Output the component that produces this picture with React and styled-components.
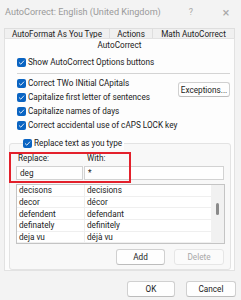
import React from "react";
import styled, { createGlobalStyle } from "styled-components";

const Global = createGlobalStyle`
  html, body {
    margin: 0;
    padding: 0;
    background: #f3f3f3;
  }
  body {
    font-family: Roboto, "Liberation Sans", sans-serif;
    font-size: 8.2px;
    color: #1b1b1b;
  }
`;

const Dialog = styled.div`
  width: 241px;
  height: 300px;
  background: #f3f3f3;
  display: flex;
  flex-direction: column;
  overflow: hidden;
`;

const TitleBar = styled.div`
  height: 24px;
  display: flex;
  align-items: center;
  padding-left: 5px;
  color: #9a9a9a;
  font-size: 9.1px;
`;

const Controls = styled.div`
  margin-left: auto;
  display: flex;
  align-items: center;
`;

const CtrlBtn = styled.span`
  width: ${p => p.w}px;
  display: flex;
  justify-content: center;
  color: #a8a8a8;
  font-size: ${p => p.size}px;
`;

const Tabs = styled.div`
  margin: 4px 6px 0 4px;
  display: flex;
  flex-direction: column;
`;

const TabRow = styled.div`
  display: flex;
  height: 10px;
`;

const Tab = styled.div`
  width: ${p => p.w}px;
  box-sizing: border-box;
  border: 1px solid #dedede;
  border-bottom: none;
  border-left: ${p => (p.first ? "1px solid #dedede" : "none")};
  background: #f0f0f0;
  display: flex;
  align-items: center;
  justify-content: center;
  white-space: nowrap;
`;

const ActiveTab = styled.div`
  height: 12px;
  background: #fdfdfd;
  border: 1px solid #e2e2e2;
  border-bottom: none;
  box-sizing: border-box;
  display: flex;
  align-items: center;
  justify-content: center;
`;

const Panel = styled.div`
  margin: 0 6px 0 4px;
  height: 221px;
  box-sizing: border-box;
  background: #fdfdfd;
  border: 1px solid #e2e2e2;
  border-top: none;
  padding: 5px 4px 0 3px;
  display: flex;
  flex-direction: column;
`;

const CheckRow = styled.label`
  height: 14px;
  display: flex;
  align-items: center;
  gap: 2px;
  padding-left: ${p => p.indent || 0}px;
  white-space: nowrap;
`;

const Box = styled.span`
  width: 9px;
  height: 9px;
  border-radius: 2px;
  background: #0a64c2;
  display: inline-flex;
  align-items: center;
  justify-content: center;
  flex: none;
`;

const Separator = styled.div`
  height: 1px;
  background: #d4d4d4;
  margin: 4px 0 2px 9px;
`;

const OptionsBlock = styled.div`
  display: flex;
  align-items: flex-start;
  padding-left: 9px;
`;

const OptionList = styled.div`
  display: flex;
  flex-direction: column;
  flex: 1;
`;

const Button = styled.button`
  width: ${p => p.w}px;
  height: ${p => p.h || 16}px;
  box-sizing: border-box;
  background: ${p => (p.disabled ? "#fbfbfb" : "#fefefe")};
  border: 1px solid ${p => (p.disabled ? "#e6e6e6" : "#d0d0d0")};
  border-bottom-color: ${p => (p.disabled ? "#e6e6e6" : "#bcbcbc")};
  border-radius: 3px;
  font: inherit;
  color: ${p => (p.disabled ? "#a8a8a8" : "#1b1b1b")};
  padding: 0;
  display: flex;
  align-items: center;
  justify-content: center;
`;

const ExceptionsButton = styled(Button)`
  margin-top: 6px;
`;

const Group = styled.fieldset`
  position: relative;
  margin: 4px 0 0 1px;
  padding: 1px 6px 4px 6px;
  border: 1px solid #e3e3e3;
  border-radius: 3px;
  background: #f8f8f8;
  min-width: 0;
  width: 222px;
  box-sizing: border-box;
`;

const Legend = styled.legend`
  padding: 0 2px 0 0;
  margin-left: 7px;
  background: #fdfdfd;
`;

const Highlight = styled.div`
  position: absolute;
  left: -1px;
  top: 2px;
  width: 122px;
  height: 31px;
  box-sizing: border-box;
  border: 2.5px solid #e3202b;
  pointer-events: none;
`;

const FieldLabels = styled.div`
  display: grid;
  grid-template-columns: 69px 1fr;
  height: 12px;
  align-items: center;
  padding: 1px 0 0 2px;
`;

const Inputs = styled.div`
  display: grid;
  grid-template-columns: 67px 140px;
  gap: 1px;
  height: 14px;
  margin-top: 2px;
`;

const Field = styled.div`
  background: #fefefe;
  border: 1px solid #d2d2d2;
  box-sizing: border-box;
  display: flex;
  align-items: center;
  padding-left: 3px;
`;

const List = styled.div`
  margin-top: 4px;
  width: 209px;
  height: 60px;
  box-sizing: border-box;
  border: 1px solid #c4c4c4;
  background: #fff;
  display: flex;
  overflow: hidden;
`;

const Rows = styled.div`
  flex: 1;
  display: flex;
  flex-direction: column;
`;

const Row = styled.div`
  height: 11.7px;
  flex: none;
  display: grid;
  grid-template-columns: 68px 1fr;
  border-bottom: 1px solid #efefef;
  box-sizing: border-box;
  align-items: center;
`;

const Cell = styled.div`
  padding-left: 2px;
  height: 100%;
  display: flex;
  align-items: center;
  border-right: ${p => (p.first ? "1px solid #efefef" : "none")};
`;

const Scrollbar = styled.div`
  width: 13px;
  background: #f1f1f1;
  display: flex;
  justify-content: center;
  padding-top: 18px;
  box-sizing: border-box;
`;

const Thumb = styled.div`
  width: 3px;
  height: 12px;
  border-radius: 2px;
  background: #8a8a8a;
`;

const GroupButtons = styled.div`
  display: flex;
  justify-content: flex-end;
  gap: 9px;
  margin-top: 5px;
`;

const Footer = styled.div`
  display: flex;
  justify-content: flex-end;
  gap: 11px;
  padding: 10px 5px 0 0;
`;

const Check = () => (
  <Box>
    <svg width="7" height="7" viewBox="0 0 8 8">
      <path d="M1.4 4.2 L3.2 5.9 L6.6 2.2" fill="none" stroke="#fff" strokeWidth="1" strokeLinecap="round" strokeLinejoin="round" />
    </svg>
  </Box>
);

const entries = [
  ["decisons", "decisions"],
  ["decor", "décor"],
  ["defendent", "defendant"],
  ["definately", "definitely"],
  ["deja vu", "déjà vu"],
];

const options = [
  "Correct TWo INitial CApitals",
  "Capitalize first letter of sentences",
  "Capitalize names of days",
  "Correct accidental use of cAPS LOCK key",
];

export default function App() {
  return (
    <>
      <Global />
      <Dialog>
        <TitleBar>
          <span>AutoCorrect: English (United Kingdom)</span>
          <Controls>
            <CtrlBtn w={14} size={9}>?</CtrlBtn>
            <CtrlBtn w={21} />
            <CtrlBtn w={14} size={13}>×</CtrlBtn>
            <CtrlBtn w={8} />
          </Controls>
        </TitleBar>
        <Tabs>
          <TabRow>
            <Tab w={106} first>AutoFormat As You Type</Tab>
            <Tab w={43}>Actions</Tab>
            <Tab w={82}>Math AutoCorrect</Tab>
          </TabRow>
          <ActiveTab>AutoCorrect</ActiveTab>
        </Tabs>
        <Panel>
          <CheckRow indent={9}>
            <Check />
            Show AutoCorrect Options buttons
          </CheckRow>
          <Separator />
          <OptionsBlock>
            <OptionList>
              {options.map(o => (
                <CheckRow key={o}>
                  <Check />
                  {o}
                </CheckRow>
              ))}
            </OptionList>
            <ExceptionsButton w={52} h={15}>Exceptions...</ExceptionsButton>
          </OptionsBlock>
          <Group>
            <Legend>
              <CheckRow>
                <Check />
                Replace text as you type
              </CheckRow>
            </Legend>
            <Highlight />
            <FieldLabels>
              <span>Replace:</span>
              <span>With:</span>
            </FieldLabels>
            <Inputs>
              <Field>deg</Field>
              <Field>*</Field>
            </Inputs>
            <List>
              <Rows>
                {entries.map(([a, b]) => (
                  <Row key={a}>
                    <Cell first>{a}</Cell>
                    <Cell>{b}</Cell>
                  </Row>
                ))}
              </Rows>
              <Scrollbar>
                <Thumb />
              </Scrollbar>
            </List>
            <GroupButtons>
              <Button w={49}>Add</Button>
              <Button w={50} disabled>Delete</Button>
            </GroupButtons>
          </Group>
        </Panel>
        <Footer>
          <Button w={48}>OK</Button>
          <Button w={50}>Cancel</Button>
        </Footer>
      </Dialog>
    </>
  );
}
